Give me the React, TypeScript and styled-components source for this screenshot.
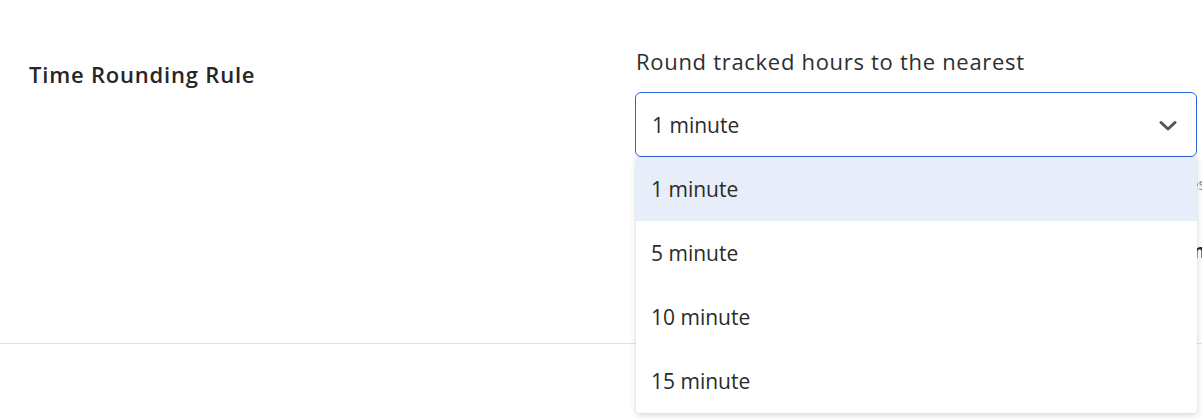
import { useState } from "react";
import styled, { createGlobalStyle } from "styled-components";

const GlobalStyle = createGlobalStyle`
  html, body {
    margin: 0;
    padding: 0;
    background: #ffffff;
    font-family: "Open Sans", "Liberation Sans", sans-serif;
    color: #262626;
  }
`;

const OPTIONS = ["1 minute", "5 minute", "10 minute", "15 minute"];

export default function App() {
  const [value, setValue] = useState(OPTIONS[0]);

  return (
    <>
      <GlobalStyle />
      <Page>
        <SettingRow>
          <Label>Time Rounding Rule</Label>
          <Control>
            <Helper>Round tracked hours to the nearest</Helper>
            <SelectWrap>
              <SelectBox>
                <SelectValue>{value}</SelectValue>
                <Chevron viewBox="0 0 18 12" width="18" height="12">
                  <path
                    d="M2 2.5 L9 9 L16 2.5"
                    fill="none"
                    stroke="#555555"
                    strokeWidth="3"
                    strokeLinecap="round"
                    strokeLinejoin="round"
                  />
                </Chevron>
              </SelectBox>
              <Menu>
                {OPTIONS.map((opt) => (
                  <MenuItem
                    key={opt}
                    $active={opt === value}
                    onClick={() => setValue(opt)}
                  >
                    {opt}
                  </MenuItem>
                ))}
              </Menu>
            </SelectWrap>
            <BehindNote>Rounding applies to entries</BehindNote>
            <BehindTitle>Round up or down</BehindTitle>
          </Control>
        </SettingRow>
      </Page>
    </>
  );
}

const Page = styled.div`
  width: 1202px;
  height: 420px;
  overflow: hidden;
  background: #ffffff;
`;

const SettingRow = styled.div`
  display: grid;
  grid-template-columns: 606px 1fr;
  height: 344px;
  padding-left: 29px;
  border-bottom: 1px solid #e3e3e3;
  box-sizing: border-box;
`;

const Label = styled.div`
  padding-top: 60px;
  font-size: 22px;
  line-height: 28px;
  font-weight: 600;
  color: #262626;
  letter-spacing: 0.8px;
`;

const Control = styled.div`
  padding-top: 47px;
  display: flex;
  flex-direction: column;
  min-width: 0;
`;

const Helper = styled.div`
  padding-left: 1px;
  font-size: 22px;
  line-height: 28px;
  color: #2e2e2e;
  letter-spacing: 0.7px;
  margin-bottom: 17px;
`;

const SelectWrap = styled.div`
  position: relative;
  width: 562px;
  z-index: 2;
`;

const SelectBox = styled.div`
  display: flex;
  align-items: center;
  justify-content: space-between;
  height: 65px;
  box-sizing: border-box;
  padding: 0 19px 0 16px;
  border: 1px solid #2d63d8;
  border-radius: 6px;
  background: #ffffff;
  cursor: pointer;
`;

const SelectValue = styled.span`
  font-size: 21px;
  color: #2a2a2a;
`;

const Chevron = styled.svg`
  display: block;
  margin-top: 2px;
`;

const Menu = styled.div`
  position: absolute;
  top: 100%;
  left: 1px;
  right: 0;
  background: #ffffff;
  border-radius: 0 0 4px 4px;
  box-shadow: 0 2px 6px rgba(0, 0, 0, 0.16), 0 0 1px rgba(0, 0, 0, 0.12);
  overflow: hidden;
`;

const MenuItem = styled.div<{ $active?: boolean }>`
  display: flex;
  align-items: center;
  height: 64px;
  padding-left: 15px;
  font-size: 21px;
  color: #2a2a2a;
  background: ${(p) => (p.$active ? "#e8eef9" : "#ffffff")};
  cursor: pointer;
`;

const BehindNote = styled.div`
  margin-top: 16px;
  font-size: 16px;
  line-height: 22px;
  color: #8a8a8a;
  white-space: nowrap;
  text-align: right;
  margin-right: -4px;
`;

const BehindTitle = styled.div`
  margin-top: 44px;
  font-size: 20px;
  line-height: 24px;
  font-weight: 700;
  color: #262626;
  white-space: nowrap;
  text-align: right;
  margin-right: -4px;
`;
